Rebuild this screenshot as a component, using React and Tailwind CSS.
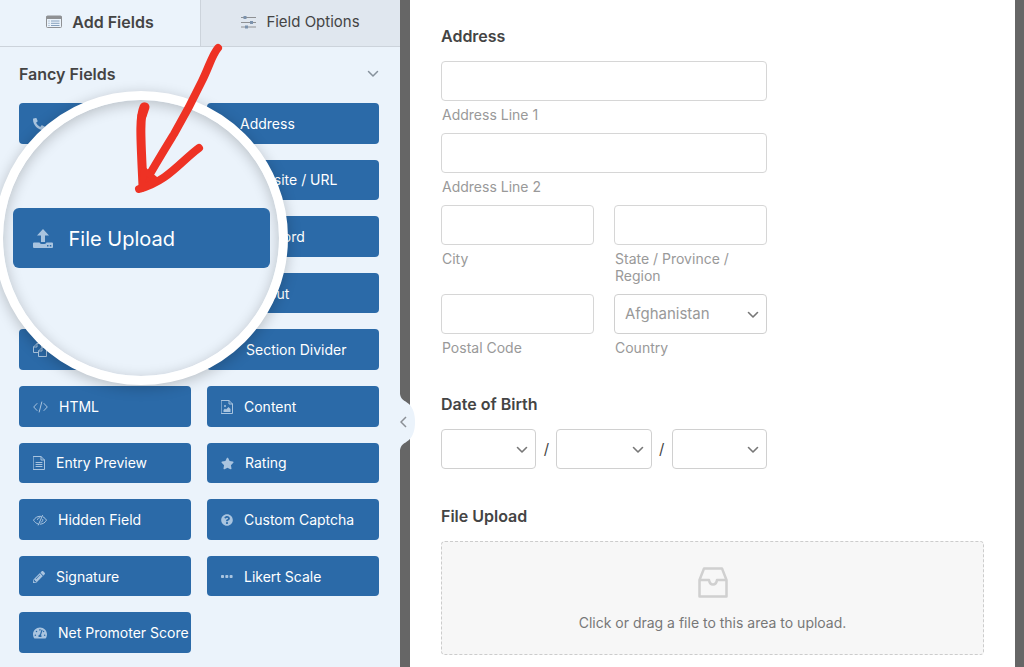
import { useState } from 'react'
import { FaPhoneAlt, FaStar, FaQuestionCircle, FaTachometerAlt, FaPencilAlt, FaMapMarkerAlt, FaLink, FaLock, FaColumns, FaArrowsAltH } from 'react-icons/fa'

function Stroke({ w, h = 14, children }) {
  return (
    <svg
      width={w}
      height={h}
      viewBox={`0 0 ${w} ${h}`}
      fill="none"
      stroke="currentColor"
      strokeWidth="1"
      strokeLinecap="round"
      strokeLinejoin="round"
      className="shrink-0"
    >
      {children}
    </svg>
  )
}

const CopyIcon = () => (
  <Stroke w={14}>
    <path d="M5.5 9.5h-5V4L4 .5h4.5v3M4 .5V4H.5" />
    <path d="M9 4.5h4.500v9h-8V8L9 4.500V8H5.500" />
  </Stroke>
)

const CodeIcon = () => (
  <Stroke w={15}>
    <path d="M4 3.500.700 7 4 10.500M11 3.500 14.300 7 11 10.500M8.800 2 6.200 12" />
  </Stroke>
)

const FileTextIcon = () => (
  <Stroke w={12}>
    <path d="M.5.5h7.500l3.500 3.500v9.500H.5zM8 .5V4h3.500M3 6.500h6M3 8.500h6M3 10.500h6" />
  </Stroke>
)

const FileImageIcon = () => (
  <Stroke w={12}>
    <path d="M.5.5h7.500l3.500 3.500v9.500H.5zM8 .5V4h3.500" />
    <circle cx="4" cy="6" r="1" fill="currentColor" stroke="none" />
    <path d="M2.500 12v-2l1.500-1.500 1 1L7.500 7l2 2v3z" fill="currentColor" stroke="none" />
  </Stroke>
)

const EyeSlashIcon = () => (
  <Stroke w={14}>
    <path d="M5 11C3 10.300 1.500 8.800.5 7.200 2 4.800 4.300 3.300 7 3.300l1.300.1M10.300 4c1.300.7 2.400 1.800 3.200 3.200-1.400 2.400-3.600 3.900-6.300 4M9.500 2.500 5.300 12M4.500 6.500C4.600 5.400 5.600 4.700 6.800 4.700M9.800 6.500c.2 1.300-.6 2.400-1.800 2.900" />
  </Stroke>
)

const EllipsisIcon = () => (
  <svg width="12" height="14" viewBox="0 0 12 14" fill="currentColor" className="shrink-0">
    <rect x="0" y="5" width="3" height="3" rx="0.8" />
    <rect x="4.300" y="5" width="3" height="3" rx="0.8" />
    <rect x="8.600" y="5" width="3" height="3" rx="0.8" />
  </svg>
)

const ListIcon = () => (
  <svg width="16" height="14" viewBox="0 0 16 14" className="text-[#8f9194]">
    <rect x="0.500" y="1" width="15" height="11.500" rx="1" fill="none" stroke="currentColor" />
    <path d="M.5 1h15v3H.5z" fill="currentColor" />
    <path d="M2.500 6h1M5 6h8.500M2.500 8.300h1M5 8.300h8.500M2.500 10.500h1M5 10.500h8.500" stroke="#86a0bd" strokeWidth="1" />
  </svg>
)

const SlidersIcon = () => (
  <svg width="15" height="14" viewBox="0 0 15 14">
    <path d="M0 2.500h15M0 7.500h15M0 12h15" stroke="#8f9194" strokeWidth="1.200" />
    <path d="M2.500 1h3v3h-3zM9 6h3v3H9zM4 10.500h3v3H4z" fill="#7d93ad" />
  </svg>
)

const UploadIcon = ({ size }) => (
  <svg width={size} height={size} viewBox="0 0 20 20" fill="currentColor">
    <path d="M10 0 16 6.500h-4V13H8V6.500H4z" />
    <path d="M1 13.500h5.500c.5 1.200 1.500 1.500 3.500 1.500s3-.3 3.500-1.500H19a1 1 0 0 1 1 1V18a1 1 0 0 1-1 1H1a1 1 0 0 1-1-1v-3.500a1 1 0 0 1 1-1zm13 2.500v1.500h1.500V16zm2.800 0v1.500h1.500V16z" />
  </svg>
)

const fields = [
  { name: 'Phone', icon: <FaPhoneAlt size={12} /> },
  { name: 'Address', icon: <FaMapMarkerAlt size={8} /> },
  { name: 'Date / Time', icon: <FileTextIcon /> },
  { name: 'Website / URL', icon: <FaLink size={12} /> },
  // label is shown by the magnifier
  { name: 'File Upload', icon: <UploadIcon size={13} />, magnified: true },
  { name: 'Password', icon: <FaLock size={8} /> },
  { name: 'Repeater', icon: <CopyIcon /> },
  { name: 'Layout', icon: <FaColumns size={13} /> },
  { name: 'Page Break', icon: <CopyIcon /> },
  { name: 'Section Divider', icon: <FaArrowsAltH size={14} /> },
  { name: 'HTML', icon: <CodeIcon /> },
  { name: 'Content', icon: <FileImageIcon /> },
  { name: 'Entry Preview', icon: <FileTextIcon /> },
  { name: 'Rating', icon: <FaStar size={13} /> },
  { name: 'Hidden Field', icon: <EyeSlashIcon /> },
  { name: 'Custom Captcha', icon: <FaQuestionCircle size={12} /> },
  { name: 'Signature', icon: <FaPencilAlt size={12} /> },
  { name: 'Likert Scale', icon: <EllipsisIcon /> },
  { name: 'Net Promoter Score', icon: <FaTachometerAlt size={14} /> },
]

function Chevron({ className }) {
  return (
    <svg width="12" height="8" viewBox="0 0 12 8" fill="none" stroke="currentColor" strokeLinecap="round" strokeLinejoin="round" className={className}>
      <path d="M1.500 1.500 6 6l4.500-4.500" />
    </svg>
  )
}

function SubLabel({ htmlFor, children }) {
  return (
    <label htmlFor={htmlFor} className="mt-[5px] block pl-px text-sm leading-[17px] text-[#999]">
      {children}
    </label>
  )
}

function TextField({ id, label }) {
  return (
    <div>
      <input id={id} type="text" className="block h-10 w-full rounded border border-[#d6d6d6] bg-white px-2.5 text-[15px] outline-none" />
      <SubLabel htmlFor={id}>{label}</SubLabel>
    </div>
  )
}

function Select({ id, label, options }) {
  return (
    <div className="relative flex-1 text-[#777]">
      <select id={id} aria-label={label} className="block h-10 w-full appearance-none rounded border border-[#d0d0d0] bg-white px-2.5 text-[15px] text-[#999] outline-none">
        {options.map((o) => (
          <option key={o}>{o}</option>
        ))}
      </select>
      <Chevron className="pointer-events-none absolute right-2 top-[17px] stroke-[1.6]" />
    </div>
  )
}

function Magnifier() {
  return (
    <div className="pointer-events-none absolute -left-1.5 top-[91px] flex size-[294px] items-center justify-center rounded-full border-9 border-white bg-[#ebf3fb] shadow-[0_3px_14px_rgba(0,0,0,0.22),inset_0_3px_14px_rgba(0,0,0,0.22)]">
      <div className="flex h-[60px] w-[257px] items-center gap-4 rounded-md bg-[#2b6aa8] px-5 pt-0.5 text-xl text-white">
        <span className="text-[#a9c4df]">
          <UploadIcon size={20} />
        </span>
        File Upload
      </div>
    </div>
  )
}

function RedArrow() {
  return (
    <svg width="96" height="156" viewBox="0 0 96 156" fill="none" stroke="#ee3224" strokeLinecap="round" strokeLinejoin="round" className="pointer-events-none absolute left-[130px] top-10">
      <path d="M88 8C82 15 79 27 72 41 62 62 55 75 44 94 33 112 25 125 13 146" strokeWidth="8" />
      <path d="M14 67C9 78 11 101 13 146" strokeWidth="9" />
      <path d="M15 67 12 76" strokeWidth="9" />
      <path d="M69 108C50 122 38 141 9 149" strokeWidth="8" />
      <path d="m14 130 12 10-14 9z" strokeWidth="6" fill="#ee3224" />
    </svg>
  )
}

function Sidebar() {
  const [open, setOpen] = useState(true)

  return (
    <aside className="relative w-[400px] shrink-0 bg-[#ebf3fb]">
      <div className="grid h-[47px] grid-cols-2 border-b border-[#ccd3db] text-[#444]">
        <button type="button" className="flex items-center justify-center gap-2.5 pb-0.5 text-base font-semibold">
          <ListIcon />
          Add Fields
        </button>
        <button type="button" className="flex items-center justify-center gap-2.5 border-l border-[#ccd3db] bg-[#e0e7ef] pb-0.5 text-[15px]">
          <SlidersIcon />
          Field Options
        </button>
      </div>

      <button
        type="button"
        aria-expanded={open}
        onClick={() => setOpen(!open)}
        className="flex h-14 w-full items-center justify-between pb-0.5 pl-[19px] pr-[21px] text-base font-semibold text-[#444]"
      >
        Fancy Fields
        <Chevron className="stroke-[1.5] text-[#86919c]" />
      </button>

      {open && (
        <div className="grid h-[550px] grid-cols-2 grid-rows-10 gap-4 pl-[19px] pr-[21px]">
          {fields.map((f) => (
            <button
              key={f.name}
              type="button"
              aria-label={f.name}
              className="flex items-center gap-[11px] whitespace-nowrap rounded bg-[#2b6aa8] pl-3.5 pt-px text-sm text-white"
            >
              <span className="text-[#a9c4df]">{f.icon}</span>
              {!f.magnified && f.name}
            </button>
          ))}
        </div>
      )}

      <button type="button" aria-label="Collapse panel" className="absolute left-full top-[394px] text-[#8a8f95]">
        <svg width="15" height="56" viewBox="0 0 15 56" fill="none">
          <path d="M0 0c1 6 4 6 9 10 4 4 6 10 6 18s-2 14-6 18c-5 4-8 4-9 10z" fill="#ebf3fb" />
          <path d="M6 23 1 28 6 33" stroke="currentColor" strokeWidth="1.500" />
        </svg>
      </button>

      <Magnifier />
      <RedArrow />
    </aside>
  )
}

export default function App() {
  return (
    <div className="flex min-h-screen overflow-hidden bg-[#666] font-['Inter',sans-serif]">
      <Sidebar />

      <main className="ml-2.5 mr-[9px] flex-1 bg-white px-[31px] pt-6 text-[#444]">
        <section className="w-[326px]">
          <h2 className="text-base font-semibold">Address</h2>
          <div className="mt-[13px] grid grid-cols-1 gap-2.5">
            <TextField id="line1" label="Address Line 1" />
            <TextField id="line2" label="Address Line 2" />
            <div className="grid grid-cols-2 gap-x-5 gap-y-2.5">
              <TextField id="city" label="City" />
              <TextField id="state" label="State / Province / Region" />
              <TextField id="postal" label="Postal Code" />
              <div>
                <Select id="country" options={['Afghanistan']} />
                <SubLabel htmlFor="country">Country</SubLabel>
              </div>
            </div>
          </div>
        </section>

        <section className="mt-9 w-[326px]">
          <h2 className="text-base font-semibold">Date of Birth</h2>
          <div className="mt-[13px] flex items-center">
            <Select label="Month" options={['']} />
            <span className="w-5 text-center text-[15px]">/</span>
            <Select label="Day" options={['']} />
            <span className="w-5 text-center text-[15px]">/</span>
            <Select label="Year" options={['']} />
          </div>
        </section>

        <section className="mt-[35px]">
          <h2 className="text-base font-semibold">File Upload</h2>
          <label className="mt-[13px] flex h-[114px] flex-col items-center rounded border border-dashed border-[#ccc] bg-[#f7f7f7] pt-[25px] text-sm text-[#777]">
            <svg width="30" height="31" viewBox="0 0 30 31" fill="none" stroke="#d0d0d0" strokeWidth="2.500" strokeLinejoin="round">
              <path d="M1.500 13 6 1.500h18L28.500 13v16.500h-27z" />
              <path d="M1.500 13H11c.5 3 1.800 4.500 4 4.500s3.500-1.500 4-4.500h9.500" />
            </svg>
            <span className="mt-[15px]">Click or drag a file to this area to upload.</span>
            <input type="file" className="sr-only" />
          </label>
        </section>
      </main>
    </div>
  )
}
